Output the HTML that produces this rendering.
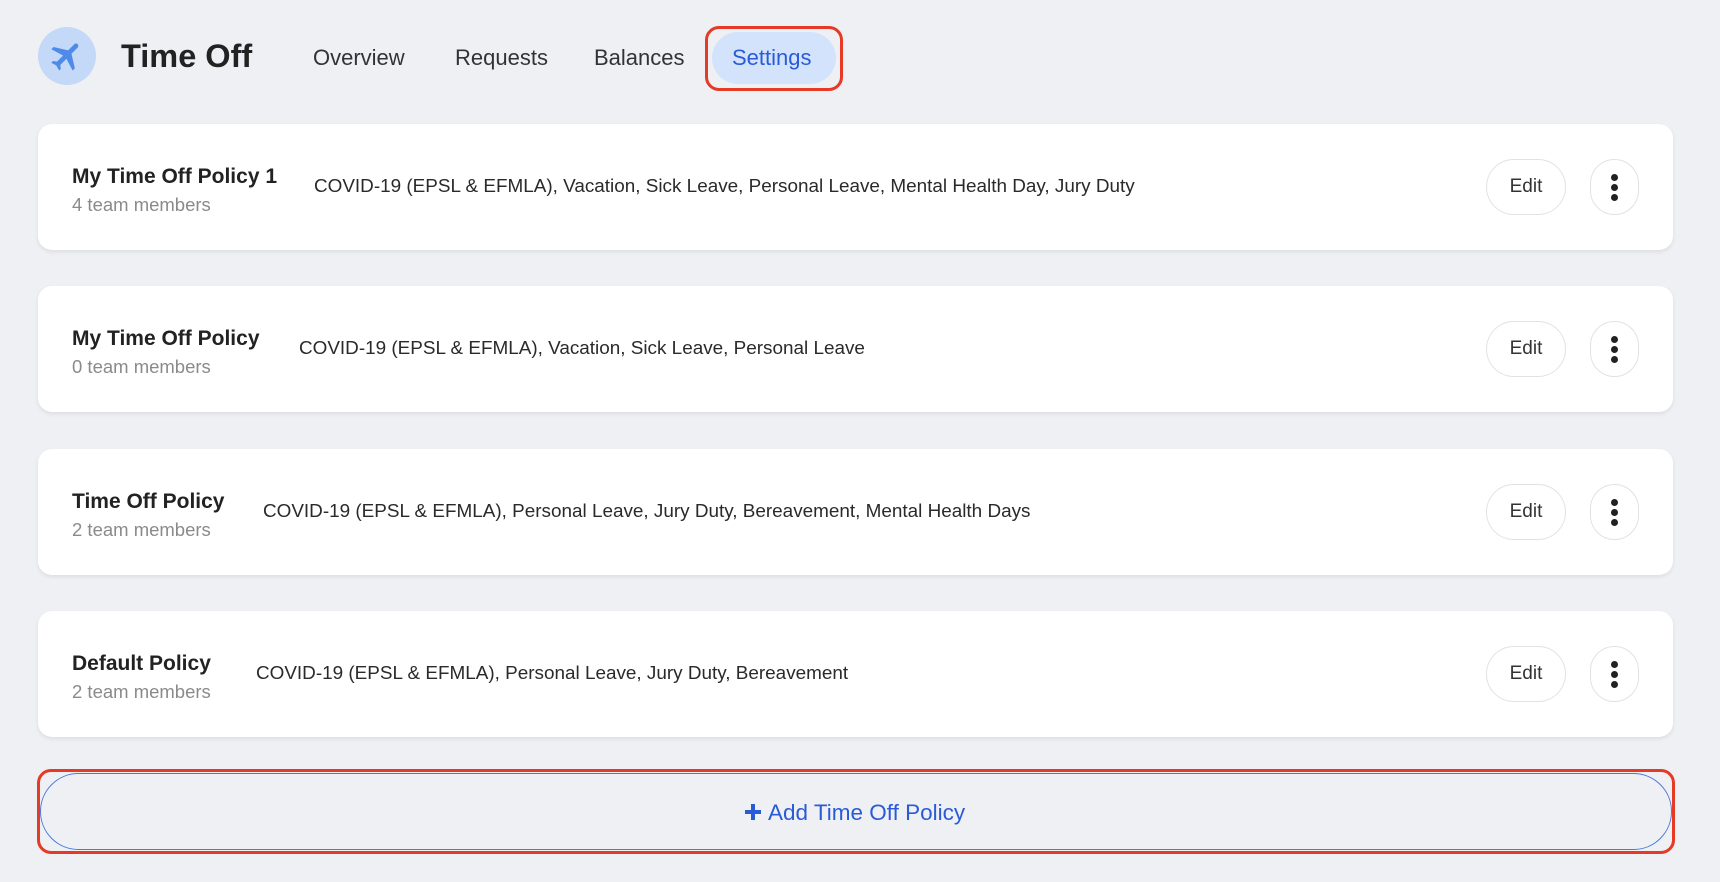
<!DOCTYPE html>
<html><head><style>
body{margin:0;width:1720px;height:882px;background:#eff0f4;font-family:"Liberation Sans",sans-serif;position:relative;overflow:hidden;color:#222}
.a{position:absolute}
.nav{position:absolute;top:45px;font-size:22px;color:#333}
.card{position:absolute;left:38px;width:1635px;height:126px;background:#fff;border-radius:14px;box-shadow:0 2px 4px rgba(0,0,0,.08)}
.t{position:absolute;left:34px;top:41px;font-size:21px;font-weight:bold;color:#222}
.s{position:absolute;left:34px;top:70px;font-size:18.5px;color:#8a8a8a}
.d{position:absolute;top:52px;font-size:18.9px;color:#2a2a2a}
.e{position:absolute;left:1448px;top:35px;width:78px;height:54px;border:1px solid #e2e2e2;border-radius:28px;text-align:center;line-height:54px;font-size:19px;color:#333}
.m{position:absolute;left:1552px;top:35px;width:47px;height:54px;border:1px solid #e2e2e2;border-radius:26px}
.m i{position:absolute;left:20px;width:7px;height:7px;border-radius:50%;background:#222}
</style></head><body>
<div class="a" style="left:38px;top:27px;width:58px;height:58px;border-radius:50%;background:#c4d8f7"></div>
<svg class="a" style="left:48px;top:37px" width="38" height="38" viewBox="0 0 24 24"><path fill="#4f8ae8" d="M21 16v-2l-8-5V3.5A1.5 1.5 0 0 0 11.5 2 1.5 1.5 0 0 0 10 3.5V9l-8 5v2l8-2.5V19l-2 1.5V22l3.5-1 3.5 1v-1.5L13 19v-5.5z" transform="rotate(45 12 12)"/></svg>
<div class="a" style="left:121px;top:38px;font-size:32.5px;font-weight:bold;color:#222">Time Off</div>
<div class="nav" style="left:313px">Overview</div>
<div class="nav" style="left:455px">Requests</div>
<div class="nav" style="left:594px">Balances</div>
<div class="a" style="left:705px;top:26px;width:132px;height:59px;border:3px solid #e53a25;border-radius:14px"></div>
<div class="a" style="left:712px;top:32px;width:124px;height:52px;background:#d2e3fb;border-radius:26px"></div>
<div class="nav" style="left:732px;color:#2a5bd7">Settings</div>

<div class="card" style="top:124px"><div class="t">My Time Off Policy 1</div><div class="s">4 team members</div><div class="d" style="left:276px">COVID-19 (EPSL &amp; EFMLA), Vacation, Sick Leave, Personal Leave, Mental Health Day, Jury Duty</div><div class="e">Edit</div><div class="m"><i style="top:14px"></i><i style="top:24px"></i><i style="top:34px"></i></div></div>
<div class="card" style="top:286px"><div class="t">My Time Off Policy</div><div class="s">0 team members</div><div class="d" style="left:261px">COVID-19 (EPSL &amp; EFMLA), Vacation, Sick Leave, Personal Leave</div><div class="e">Edit</div><div class="m"><i style="top:14px"></i><i style="top:24px"></i><i style="top:34px"></i></div></div>
<div class="card" style="top:449px"><div class="t">Time Off Policy</div><div class="s">2 team members</div><div class="d" style="left:225px">COVID-19 (EPSL &amp; EFMLA), Personal Leave, Jury Duty, Bereavement, Mental Health Days</div><div class="e">Edit</div><div class="m"><i style="top:14px"></i><i style="top:24px"></i><i style="top:34px"></i></div></div>
<div class="card" style="top:611px"><div class="t">Default Policy</div><div class="s">2 team members</div><div class="d" style="left:218px">COVID-19 (EPSL &amp; EFMLA), Personal Leave, Jury Duty, Bereavement</div><div class="e">Edit</div><div class="m"><i style="top:14px"></i><i style="top:24px"></i><i style="top:34px"></i></div></div>

<div class="a" style="left:37px;top:769px;width:1632px;height:79px;border:3px solid #e53a25;border-radius:14px"></div>
<div class="a" style="left:40px;top:773px;width:1632px;height:77px;border:1px solid #4a78e0;border-radius:40px;box-sizing:border-box"></div>
<div class="a" style="left:745px;top:810px;width:16px;height:4px;background:#2a5bd7"></div>
<div class="a" style="left:751px;top:804px;width:4px;height:16px;background:#2a5bd7"></div>
<div class="a" style="left:768px;top:800px;font-size:22.5px;color:#2a5bd7">Add Time Off Policy</div>
</body></html>
